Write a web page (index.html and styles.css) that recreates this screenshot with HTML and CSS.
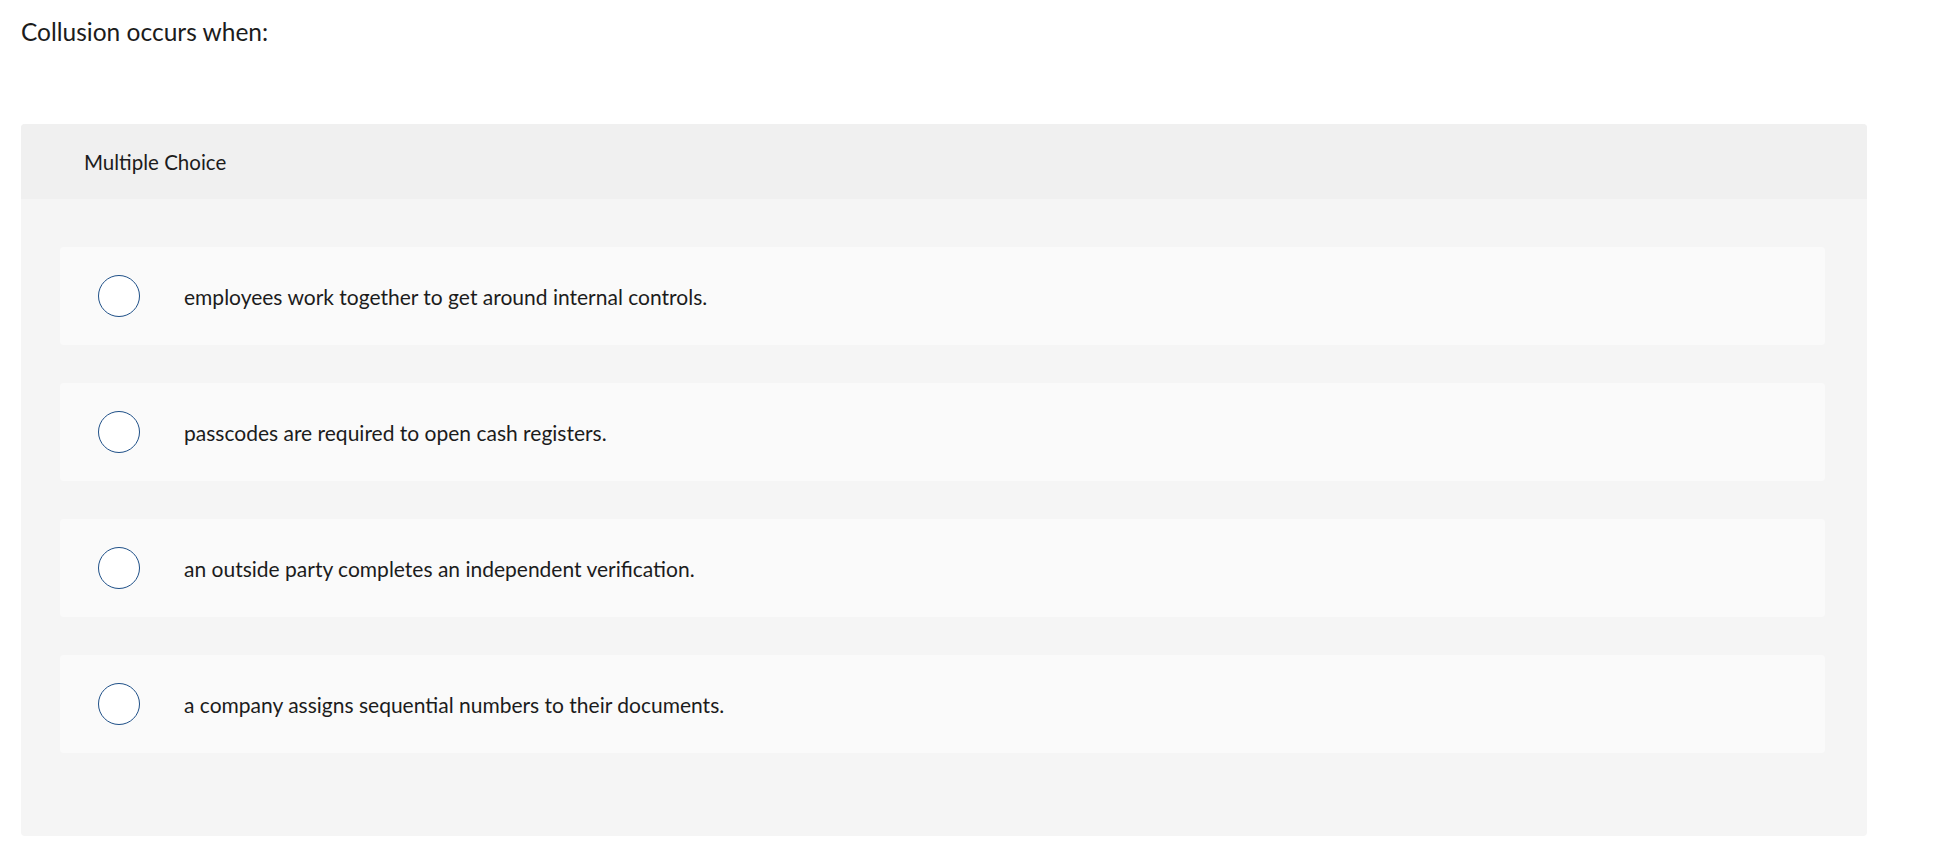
FILE: index.html
```html
<!DOCTYPE html>
<html lang="en">
<head>
  <meta charset="UTF-8">
  <meta name="viewport" content="width=device-width, initial-scale=1.0">
  <title>Multiple Choice</title>
  <link rel="stylesheet" href="styles.css">
</head>
<body>
  <div class="question">
    <p class="prompt">Collusion occurs when:</p>

    <div class="choice-panel">
      <div class="choice-header">Multiple Choice</div>
      <div class="choice-list">
        <label class="choice">
          <input type="radio" name="answer" class="choice-radio">
          <span class="choice-text">employees work together to get around internal controls.</span>
        </label>
        <label class="choice">
          <input type="radio" name="answer" class="choice-radio">
          <span class="choice-text">passcodes are required to open cash registers.</span>
        </label>
        <label class="choice">
          <input type="radio" name="answer" class="choice-radio">
          <span class="choice-text">an outside party completes an independent verification.</span>
        </label>
        <label class="choice">
          <input type="radio" name="answer" class="choice-radio">
          <span class="choice-text">a company assigns sequential numbers to their documents.</span>
        </label>
      </div>
    </div>
  </div>
</body>
</html>
```

FILE: styles.css
```css
body {
  margin: 0;
  background-color: #fff;
  color: #1c1c1c;
  font-family: 'Lato', 'Liberation Sans', sans-serif;
}

.question {
  width: 1846px;
  padding: 0 0 0 21px;
}

.prompt {
  margin: 0;
  padding-top: 17px;
  height: 124px;
  box-sizing: border-box;
  font-size: 24.5px;
  line-height: 30px;
}

.choice-panel {
  width: 1846px;
  background-color: #f5f5f5;
  border-radius: 4px;
  overflow: hidden;
}

.choice-header {
  height: 75px;
  padding-left: 63px;
  display: flex;
  align-items: center;
  background-color: #f0f0f0;
  font-size: 20.5px;
}

.choice-list {
  display: flex;
  flex-direction: column;
  gap: 38px;
  padding: 48px 42px 83px 39px;
}

.choice {
  height: 98px;
  display: flex;
  align-items: center;
  background-color: #fafafa;
  border-radius: 4px;
  cursor: pointer;
}

.choice-radio {
  appearance: none;
  -webkit-appearance: none;
  margin: 0 44px 0 38px;
  width: 42px;
  height: 42px;
  border: 1.5px solid #1f5088;
  border-radius: 50%;
  background-color: #fff;
  cursor: pointer;
}

.choice-text {
  font-size: 21px;
}
```
